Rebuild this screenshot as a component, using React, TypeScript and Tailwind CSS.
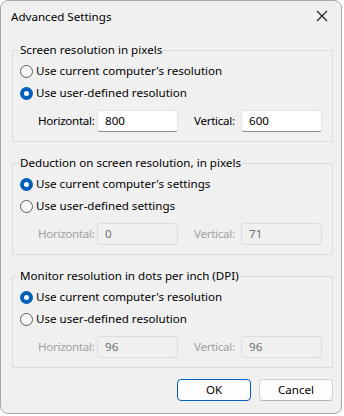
import React from "react";

const font = { fontFamily: '"Noto Sans", "Segoe UI", sans-serif' };

interface RadioProps {
  label: string;
  checked?: boolean;
}

const Radio = ({ label, checked }: RadioProps) => (
  <div className="flex h-[22px] items-center pl-[7px]">
    {checked ? (
      <div className="flex h-[13px] w-[13px] items-center justify-center rounded-full bg-[#005fb8]">
        <div className="h-[5px] w-[5px] rounded-full bg-white" />
      </div>
    ) : (
      <div className="h-[13px] w-[13px] rounded-full border border-[#5d5d5d] bg-[#f6f6f6]" />
    )}
    <span className="ml-[3px] text-[11.6px] text-black">{label}</span>
  </div>
);

interface FieldProps {
  value: string;
  disabled?: boolean;
}

const Field = ({ value, disabled }: FieldProps) => (
  <div
    className={`flex h-[22px] w-[81px] shrink-0 items-center rounded-[3px] border px-[7px] text-[11.6px] ${
      disabled
        ? "border-[#dddddd] bg-[#f0f0f0] text-[#6f6f6f]"
        : "border-[#e5e5e5] border-b-[#8a8a8a] bg-white text-black"
    }`}
  >
    {value}
  </div>
);

interface GroupProps {
  title: string;
  first: string;
  second: string;
  checkedFirst: boolean;
  h: string;
  v: string;
  disabled?: boolean;
  className?: string;
}

const Group = ({
  title,
  first,
  second,
  checkedFirst,
  h,
  v,
  disabled,
  className,
}: GroupProps) => {
  const labelColor = disabled ? "text-[#a0a0a0]" : "text-black";
  return (
    <fieldset
      className={`ml-[11px] w-[321px] border border-[#dcdcdc] pt-[2px] pb-[9px] ${className ?? ""}`}
    >
      <legend className="ml-[6px] h-[16px] px-[1px] text-[11.6px] leading-[16px] text-black">
        {title}
      </legend>
      <Radio label={first} checked={checkedFirst} />
      <Radio label={second} checked={!checkedFirst} />
      <div className="mt-[6px] flex items-center text-[11.6px]">
        <span
          className={`ml-[25px] w-[59px] shrink-0 whitespace-nowrap tracking-[-0.3px] ${labelColor}`}
        >
          Horizontal:
        </span>
        <Field value={h} disabled={disabled} />
        <span
          className={`ml-[16px] w-[47px] shrink-0 whitespace-nowrap tracking-[-0.3px] ${labelColor}`}
        >
          Vertical:
        </span>
        <Field value={v} disabled={disabled} />
      </div>
    </fieldset>
  );
};

export default function App() {
  return (
    <div className="h-[416px] w-[344px] bg-white" style={font}>
      <div className="h-[414px] w-[342px] rounded-[8px] border border-[#a8a8a8] bg-[#f0f0f0]">
        {/* Title bar */}
        <div className="flex h-[31px] items-center justify-between pl-[10px] pr-[8px]">
          <span className="text-[11.6px] text-black">Advanced Settings</span>
          <svg width="12" height="12" viewBox="0 0 12 12" className="mr-[5px] -mt-[2px]">
            <path d="M1 1L11 11M11 1L1 11" stroke="#1a1a1a" strokeWidth="1.1" />
          </svg>
        </div>

        <Group
          className="mt-[10px]"
          title="Screen resolution in pixels"
          first="Use current computer's resolution"
          second="Use user-defined resolution"
          checkedFirst={false}
          h="800"
          v="600"
        />
        <Group
          className="mt-[13px]"
          title="Deduction on screen resolution, in pixels"
          first="Use current computer's settings"
          second="Use user-defined settings"
          checkedFirst={true}
          h="0"
          v="71"
          disabled
        />
        <Group
          className="mt-[13px]"
          title="Monitor resolution in dots per inch (DPI)"
          first="Use current computer's resolution"
          second="Use user-defined resolution"
          checkedFirst={true}
          h="96"
          v="96"
          disabled
        />

        {/* Buttons */}
        <div className="mt-[11px] flex justify-end gap-[8px] pr-[8px]">
          <button className="h-[22px] w-[74px] rounded-[4px] border border-[#005fb8] bg-[#fdfdfd] text-[11.6px] text-black">
            OK
          </button>
          <button className="h-[22px] w-[74px] rounded-[4px] border border-[#d0d0d0] border-b-[#b5b5b5] bg-[#fdfdfd] text-[11.6px] text-black">
            Cancel
          </button>
        </div>
      </div>
    </div>
  );
}
